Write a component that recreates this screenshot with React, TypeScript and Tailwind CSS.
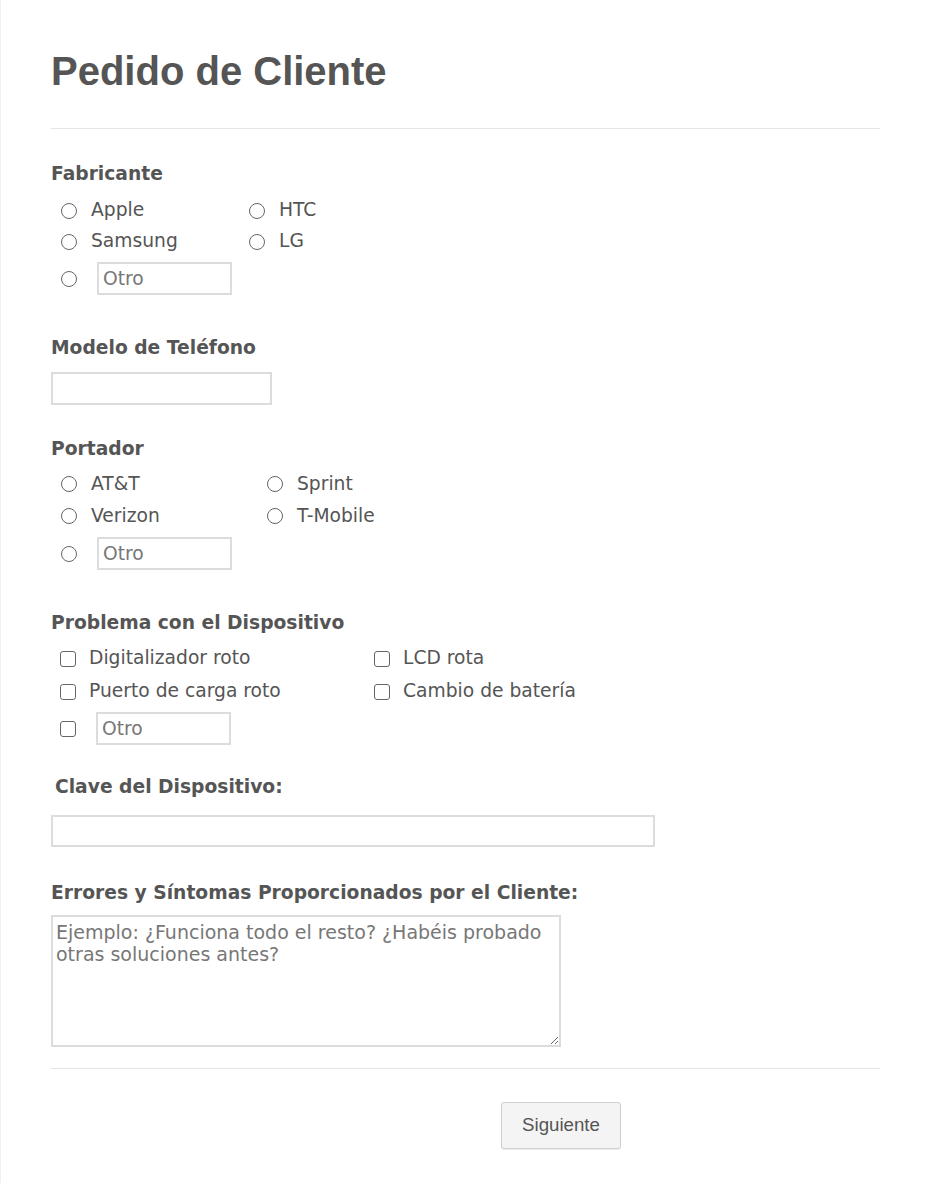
import React from "react";

const sans = { fontFamily: '"DejaVu Sans", Verdana, sans-serif' };
const arial = { fontFamily: '"Liberation Sans", Arial, sans-serif' };

const Radio = () => (
  <span className="block w-[16px] h-[16px] shrink-0 rounded-full border border-[#666] bg-white" />
);

const Check = () => (
  <span className="block w-[16px] h-[16px] shrink-0 rounded-[3px] border border-[#666] bg-white" />
);

const Label = ({ children, className = "" }: { children: React.ReactNode; className?: string }) => (
  <div className={`text-[18.7px] leading-[24px] font-bold text-[#555] ${className}`}>{children}</div>
);

const inputCls =
  "block border-2 border-[#dcdcdc] bg-white px-[4px] text-[18.7px] text-[#555] placeholder:text-[#777] outline-none";

const Option = ({ kind, text, h }: { kind: "radio" | "check"; text: string; h: string }) => (
  <label className={`flex items-center ${h} ${kind === "radio" ? "gap-[14px]" : "gap-[13px]"}`}>
    {kind === "radio" ? <Radio /> : <Check />}
    <span className="text-[18.7px] text-[#555]">{text}</span>
  </label>
);

const Group = ({
  kind,
  items,
  col,
  h,
  rowsTop,
  otherTop,
}: {
  kind: "radio" | "check";
  items: string[];
  col: string;
  h: string;
  rowsTop: string;
  otherTop: string;
}) => (
  <div className={kind === "radio" ? "ml-[10px]" : "ml-[9px]"}>
    <div className={`grid ${col} ${rowsTop}`}>
      {items.map((t) => (
        <Option key={t} kind={kind} text={t} h={h} />
      ))}
    </div>
    <div className={`flex items-center ${otherTop} gap-[20px]`}>
      {kind === "radio" ? <Radio /> : <Check />}
      <input placeholder="Otro" className={`${inputCls} w-[135px] h-[33px]`} style={sans} />
    </div>
  </div>
);

export default function App() {
  return (
    <div className="min-h-[1183px] bg-white border-l border-[#f0f0f0] pl-[50px] pr-[50px]" style={sans}>
      <h1 className="pt-[47px] text-[40px] leading-[48px] font-bold text-[#555]" style={arial}>
        Pedido de Cliente
      </h1>
      <hr className="mt-[33px] border-0 border-t border-[#e6e6e6]" />

      <Label className="mt-[33px]">Fabricante</Label>
      <Group
        kind="radio"
        items={["Apple", "HTC", "Samsung", "LG"]}
        col="grid-cols-[188px_auto]"
        h="h-[31px]"
        rowsTop="mt-[9px]"
        otherTop="mt-[5px]"
      />

      <Label className="mt-[41px]">Modelo de Teléfono</Label>
      <input className={`${inputCls} mt-[12px] w-[221px] h-[33px]`} style={sans} />

      <Label className="mt-[32px]">Portador</Label>
      <Group
        kind="radio"
        items={["AT&T", "Sprint", "Verizon", "T-Mobile"]}
        col="grid-cols-[206px_auto]"
        h="h-[32px]"
        rowsTop="mt-[7px]"
        otherTop="mt-[5px]"
      />

      <Label className="mt-[41px]">Problema con el Dispositivo</Label>
      <Group
        kind="check"
        items={["Digitalizador roto", "LCD rota", "Puerto de carga roto", "Cambio de batería"]}
        col="grid-cols-[314px_auto]"
        h="h-[33px]"
        rowsTop="mt-[7px]"
        otherTop="mt-[4px]"
      />

      <Label className="mt-[30px] pl-[4px]">Clave del Dispositivo:</Label>
      <input className={`${inputCls} mt-[16px] w-[604px] h-[32px]`} style={sans} />

      <Label className="mt-[34px]">Errores y Síntomas Proporcionados por el Cliente:</Label>
      <textarea
        className="block mt-[10px] w-[510px] h-[132px] border-2 border-[#dcdcdc] px-[3px] pt-[4px] text-[19px] leading-[22px] text-[#555] placeholder:text-[#777] outline-none"
        style={sans}
        placeholder="Ejemplo: ¿Funciona todo el resto? ¿Habéis probado otras soluciones antes?"
      />

      <hr className="mt-[21px] border-0 border-t border-[#e6e6e6]" />

      <button
        className="mt-[33px] ml-[450px] w-[120px] h-[47px] rounded-[3px] border border-[#cfcfcf] bg-[#f4f4f4] text-[18.7px] text-[#555] shadow-[0_1px_1px_rgba(0,0,0,0.08)]"
        style={arial}
      >
        Siguiente
      </button>
    </div>
  );
}
